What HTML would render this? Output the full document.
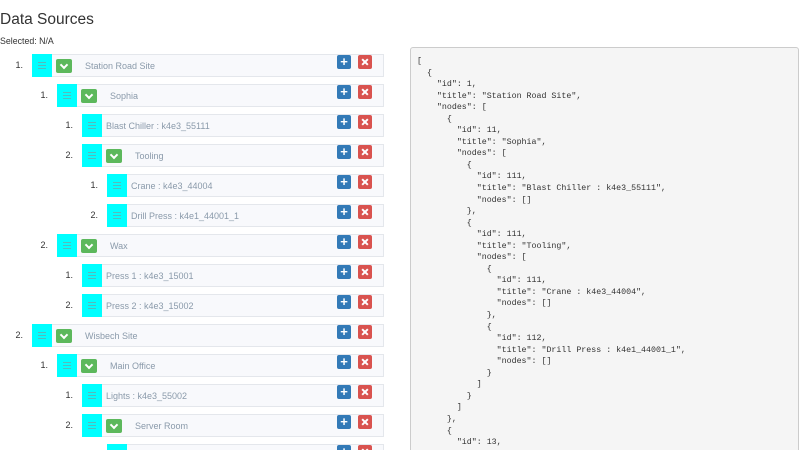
<!DOCTYPE html><html><head><style>
html,body{margin:0;width:800px;height:450px;overflow:hidden}
body{background:#fff;font-family:"Liberation Sans",sans-serif;color:#333;position:relative}
h1{position:absolute;left:0;top:11px;margin:0;font-size:15.5px;font-weight:normal}
.sel{position:absolute;left:0;top:36px;font-size:8.8px}
.row{position:absolute;height:23px;right:416px;background:#f8f9fc;border:1px solid #e4e7ec;box-sizing:border-box}
.num{position:absolute;font-size:9px;width:20px;text-align:right}
.h{position:absolute;left:-1px;top:-1px;width:20px;height:23px;background:#0ff}
.h:after{content:"";position:absolute;left:6px;top:8px;width:8px;height:5px;border-top:1px solid #5bb;border-bottom:1px solid #5bb;background:linear-gradient(#5bb,#5bb) 0 2px/8px 1px no-repeat}
.c{position:absolute;left:23px;top:4px;width:16px;height:14px;background:#5cb85c;border-radius:2px}
.c:after{content:"";position:absolute;left:5px;top:3px;width:4px;height:4px;border-right:2px solid #fff;border-bottom:2px solid #fff;transform:rotate(45deg)}
.t{position:absolute;top:6px;font-size:9px;color:#8a9aaa;white-space:nowrap}
.p,.x{position:absolute;top:0;width:14px;height:14px;border-radius:2px;color:#fff;font-size:13px;font-weight:bold;text-align:center;line-height:14px}
.p{right:32px;background:#337ab7}.x{right:11px;background:#d9534f}
.x:before,.x:after{content:"";position:absolute;left:6px;top:3px;width:2px;height:8px;background:#fff;transform:rotate(45deg)}
.x:after{transform:rotate(-45deg)}
pre{position:absolute;left:410px;top:47px;width:389px;height:420px;margin:0;box-sizing:border-box;background:#f5f5f5;border:1px solid #ccc;border-radius:3px;padding:8px 6px;font-family:"Liberation Mono",monospace;font-size:8.3px;line-height:11.55px;color:#333}
</style></head><body>
<h1>Data Sources</h1><div class="sel">Selected: N/A</div>
<div id="t"></div>
<script>
var R=[[0,"1.","Station Road Site",1],[1,"1.","Sophia",1],[2,"1.","Blast Chiller : k4e3_55111",0],[2,"2.","Tooling",1],[3,"1.","Crane : k4e3_44004",0],[3,"2.","Drill Press : k4e1_44001_1",0],[1,"2.","Wax",1],[2,"1.","Press 1 : k4e3_15001",0],[2,"2.","Press 2 : k4e3_15002",0],[0,"2.","Wisbech Site",1],[1,"1.","Main Office",1],[2,"1.","Lights : k4e3_55002",0],[2,"2.","Server Room",1],[3,"1.","",0]];
var h="";R.forEach(function(r,i){var x=32+25*r[0],y=54+30*i;
h+='<div class="num" style="left:'+(x-29)+'px;top:'+(y+6)+'px">'+r[1]+'</div><div class="row" style="left:'+x+'px;top:'+y+'px"><div class="h"></div>'+(r[3]?'<div class="c"></div><div class="t" style="left:52px">'+r[2]+'</div>':'<div class="t" style="left:23px">'+r[2]+'</div>')+'<div class="p">+</div><div class="x"></div></div>';});
document.getElementById("t").innerHTML=h;
</script>
<pre>[
  {
    "id": 1,
    "title": "Station Road Site",
    "nodes": [
      {
        "id": 11,
        "title": "Sophia",
        "nodes": [
          {
            "id": 111,
            "title": "Blast Chiller : k4e3_55111",
            "nodes": []
          },
          {
            "id": 111,
            "title": "Tooling",
            "nodes": [
              {
                "id": 111,
                "title": "Crane : k4e3_44004",
                "nodes": []
              },
              {
                "id": 112,
                "title": "Drill Press : k4e1_44001_1",
                "nodes": []
              }
            ]
          }
        ]
      },
      {
        "id": 13,
</pre>
</body></html>
